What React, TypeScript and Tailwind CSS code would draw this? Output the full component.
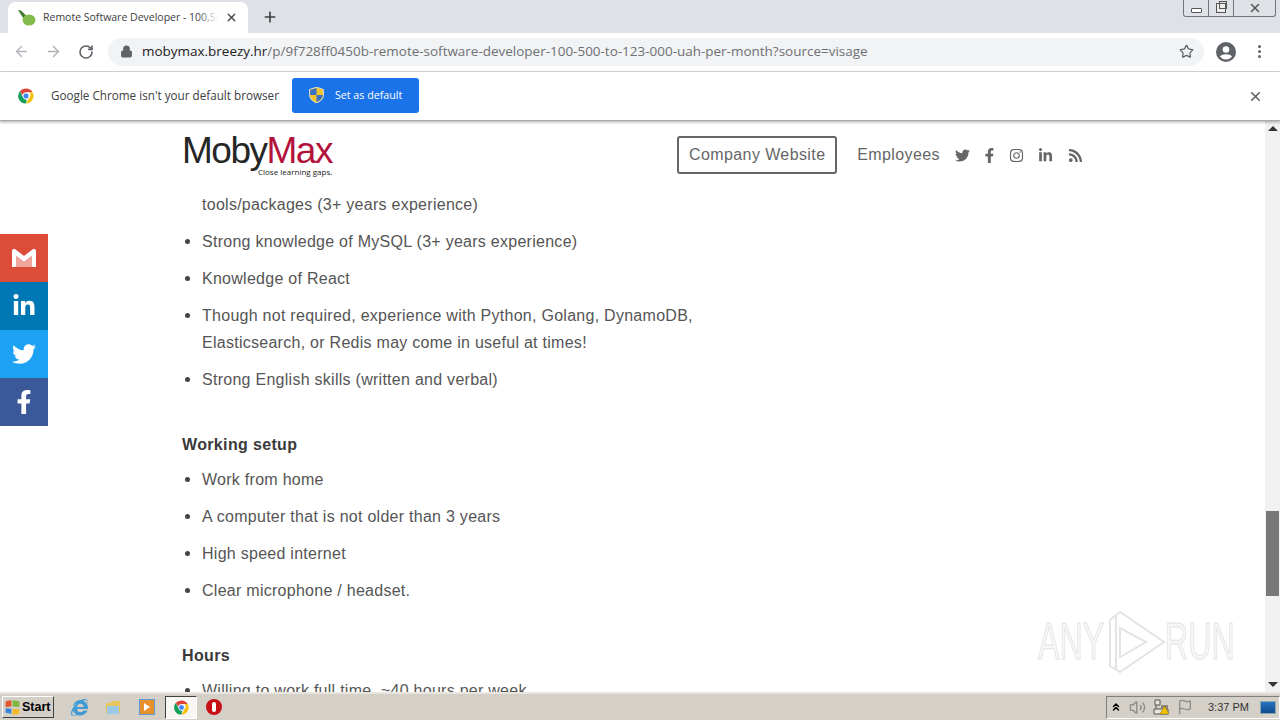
import { ArrowLeft, ArrowRight, RotateCw, Star, X, Plus, Lock, ChevronsUp, Volume2, Flag } from 'lucide-react';
import { FaTwitter, FaFacebookF, FaInstagram, FaLinkedinIn, FaRss, FaInternetExplorer } from 'react-icons/fa';

const setup = ['Work from home', 'A computer that is not older than 3 years', 'High speed internet', 'Clear microphone / headset.'];

function ChromeLogo({ size }: { size: number }) {
  return (
    <svg width={size} height={size} viewBox="0 0 48 48">
      <path d="M24 4a20 20 0 0 1 17.3 10H24a10 10 0 0 0-9.6 7.2L7.6 11.6A20 20 0 0 1 24 4z" fill="#db4437" />
      <path d="M41.3 14A20 20 0 0 1 24 44l8.6-15a10 10 0 0 0 0-15z" fill="#f4c20d" />
      <path d="M24 44A20 20 0 0 1 7.6 11.6L16 27a10 10 0 0 0 10 6.8z" fill="#0f9d58" />
      <circle cx="24" cy="24" r="8" fill="#4285f4" stroke="#fff" strokeWidth="2" />
    </svg>
  );
}

function Bullet({ children }: { children: React.ReactNode }) {
  return (
    <li className="relative pl-5 mb-[10px] leading-[27px]">
      <span className="absolute left-[3px] top-[11px] w-[5px] h-[5px] rounded-full bg-[#444]" />
      {children}
    </li>
  );
}

function TabStrip() {
  return (
    <div className="h-[33px] bg-[#dee1e6] flex items-end relative shrink-0">
      <div className="ml-2 w-[240px] h-[31px] bg-white rounded-t-lg flex items-center pl-[10px] pr-[10px]">
        <svg width="18" height="16" viewBox="0 0 18 16" className="shrink-0">
          <path d="M0 0l3 .5 5 5-2.500 3z" fill="#3f7a30" />
          <ellipse cx="11" cy="10" rx="6.500" ry="5.500" fill="#82bb4c" />
        </svg>
        <div className="relative ml-[7px] w-[175px] overflow-hidden whitespace-nowrap text-[10.5px] text-[#3c4043] font-['Open_Sans',sans-serif]">
          Remote Software Developer - 100,500 to 123,000 UAH
          <div className="absolute right-0 top-0 bottom-0 w-5 bg-gradient-to-r from-transparent to-white" />
        </div>
        <X size={13} strokeWidth={2.5} className="ml-auto text-[#45494d]" />
      </div>
      <Plus size={16} strokeWidth={2.5} className="ml-[14px] mb-2 text-[#3c4043]" />
      <div className="absolute right-1 top-0 w-[93px] h-[17px] flex border border-t-0 border-[#70757c] rounded-b-[3px] text-[#555]">
        <div className="w-[25px] border-r border-[#70757c] flex items-center justify-center">
          <div className="w-[11px] h-[5px] mt-1 border border-[#555] rounded-[1px] bg-white" />
        </div>
        <div className="w-[25px] border-r border-[#70757c] flex items-center justify-center">
          <div className="relative w-[10px] h-[10px] border border-[#555] bg-[#eee]">
            <div className="absolute -top-[3px] left-[2px] w-[8px] h-[8px] border border-[#555]" />
          </div>
        </div>
        <div className="flex-1 flex items-center justify-center">
          <X size={14} strokeWidth={2.5} />
        </div>
      </div>
    </div>
  );
}

function Toolbar() {
  return (
    <div className="h-[39px] bg-white border-b border-[#d9dadc] flex items-center shrink-0 pb-[1px]">
      <ArrowLeft size={17} className="ml-[13px] text-[#b0b4b8]" />
      <ArrowRight size={17} className="ml-[15px] text-[#b0b4b8]" />
      <RotateCw size={16} strokeWidth={2.4} className="ml-[16px] text-[#5f6368]" />
      <div className="ml-[14px] w-[1096px] h-[28px] rounded-full bg-[#f1f3f4] flex items-center pl-[12px] pr-[10px]">
        <Lock size={13} fill="#5f6368" className="text-[#5f6368]" />
        <div className="ml-[9px] text-[13.48px] text-[#202124] whitespace-nowrap font-['Open_Sans',sans-serif]">
          mobymax.breezy.hr<span className="text-[#6e7174]">/p/9f728ff0450b-remote-software-developer-100-500-to-123-000-uah-per-month?source=visage</span>
        </div>
        <Star size={15} strokeWidth={2} className="ml-auto text-[#5f6368]" />
      </div>
      <svg width="20" height="20" viewBox="0 0 20 20" className="ml-3">
        <circle cx="10" cy="10" r="10" fill="#5f6368" />
        <circle cx="10" cy="7.5" r="3.3" fill="#fff" />
        <path d="M3.8 14.6c2.500-3.200 9.900-3.200 12.400 0A8 8 0 0 1 3.800 14.600z" fill="#fff" />
      </svg>
      <div className="ml-[22px] flex flex-col gap-[2px]">
        <span className="w-[3px] h-[3px] rounded-full bg-[#5f6368]" />
        <span className="w-[3px] h-[3px] rounded-full bg-[#5f6368]" />
        <span className="w-[3px] h-[3px] rounded-full bg-[#5f6368]" />
      </div>
    </div>
  );
}

function InfoBar() {
  return (
    <div className="h-[49px] bg-white border-b border-[#a9a9a9] shadow-[0_1px_3px_rgba(0,0,0,0.35)] flex items-center pl-[17px] shrink-0 relative z-10 font-['Open_Sans',sans-serif]">
      <ChromeLogo size={18} />
      <span className="ml-[16px] text-[11.7px] text-[#3c4043]">Google Chrome isn't your default browser</span>
      <div className="ml-[13px] mb-[2px] w-[127px] h-[35px] rounded-[3px] bg-[#1a73e8] flex items-center pl-[17px] text-white text-[10.7px]">
        <svg width="15" height="16" viewBox="0 0 15 16">
          <path d="M7.5 0L14.5 2.500V8c0 4-3.500 6.500-7 8-3.500-1.500-7-4-7-8V2.500z" fill="#f4c430" stroke="#fff" strokeWidth="0.6" />
          <path d="M7.500 1v7H1.200V3zM7.500 8h6.300c-.2 3.500-3.300 5.800-6.300 7z" fill="#3b6fc4" />
        </svg>
        <span className="ml-[11px]">Set as default</span>
      </div>
      <X size={15} strokeWidth={2.5} className="ml-auto mr-[17px] text-[#5f6368]" />
    </div>
  );
}

function PageHeader() {
  return (
    <div className="h-[66px] pl-[182px] pr-[182px] pt-[2px] flex items-center bg-white tracking-[0.4px]">
      <div className="relative w-[152px] h-[48px] pt-[4px] font-['Open_Sans',sans-serif]">
        <div className="text-[37px] leading-[32px] tracking-[-1.5px] whitespace-nowrap font-['Liberation_Sans',sans-serif]">
          <span className="text-[#262626]">Moby</span>
          <span className="text-[#b3123b]">Max</span>
        </div>
        <div className="absolute left-[76px] top-[36px] text-[8px] leading-[10px] tracking-normal whitespace-nowrap text-[#222]">Close learning gaps.</div>
      </div>
      <div className="ml-auto w-[160px] h-[38px] border-2 border-[#666] rounded-[3px] flex items-center justify-center text-[#666]">Company Website</div>
      <span className="ml-[20px] text-[#666]">Employees</span>
      <div className="flex items-center ml-[15px] text-[#666] text-[15px]">
        <FaTwitter />
        <FaFacebookF className="ml-[12px]" />
        <FaInstagram className="ml-[12px]" />
        <FaLinkedinIn className="ml-[14px]" />
        <FaRss className="ml-[15px]" />
      </div>
    </div>
  );
}

function Watermark() {
  return (
    <div className="absolute left-[1038px] top-[489px] w-[194px] h-[62px] pointer-events-none blur-[0.4px]">
      <span className="absolute left-0 top-[5px] origin-left scale-x-[0.62] text-[52px] leading-[52px] text-[#f6f6f6] [-webkit-text-stroke:1px_#e2e2e2]">ANY</span>
      <svg width="58" height="64" viewBox="0 0 58 64" className="absolute left-[70px] top-0" fill="none" stroke="#e4e4e4" strokeWidth="2">
        <path d="M2 10L12 2l44 30-44 30-10-6z" />
        <path d="M12 18l26 14-26 15z" />
        <path d="M2 10v46M8 6v54" />
      </svg>
      <span className="absolute left-[127px] top-[5px] origin-left scale-x-[0.62] text-[52px] leading-[52px] text-[#f6f6f6] [-webkit-text-stroke:1px_#e2e2e2]">RUN</span>
    </div>
  );
}

function SocialBar() {
  return (
    <div className="absolute left-0 top-[113px] w-12 flex flex-col text-white">
      <div className="h-12 bg-[#dd4b39] flex items-center justify-center">
        <svg width="24" height="18" viewBox="0 0 24 18">
          <path d="M0 1.500C0 .5 1 0 2 0h1l9 7 9-7h1c1 0 2 .5 2 1.500V18h-4V7l-8 6-8-6v11H0z" fill="#fff" />
          <path d="M4 7l8 6 8-6v11H4z" fill="#f1a69c" />
        </svg>
      </div>
      <div className="h-12 bg-[#0077b5] flex items-center justify-center text-[24px]"><FaLinkedinIn /></div>
      <div className="h-12 bg-[#1da1f2] flex items-center justify-center text-[24px]"><FaTwitter /></div>
      <div className="h-12 bg-[#3b5998] flex items-center justify-center text-[24px]"><FaFacebookF /></div>
    </div>
  );
}

function Taskbar() {
  return (
    <div className="h-[28px] bg-[#d4d0c8] border-t-2 border-[#e9e6df] flex items-center shrink-0 font-['Liberation_Sans',sans-serif]">
      <div className="ml-[2px] w-[52px] h-[22px] border border-t-white border-l-white border-r-[#404040] border-b-[#404040] flex items-center pl-[1px] gap-[1px] text-[12.5px] font-bold text-black">
        <svg width="17" height="16" viewBox="0 0 14 14">
          <path d="M1 2l5-1v5.500L1 7z" fill="#e2562c" />
          <path d="M7 1l6 1v5l-6-.5z" fill="#7fb83c" />
          <path d="M1 8l5 .5V13l-5-1z" fill="#3b82d8" />
          <path d="M7 8.500l6 .5v4l-6 1z" fill="#f3bb2d" />
        </svg>
        Start
      </div>
      <FaInternetExplorer className="ml-[17px] text-[#3f9ad6] text-[17px]" />
      <svg width="16" height="16" viewBox="0 0 16 16" className="ml-[17px]">
        <path d="M1 4h5l1-2h8v12H1z" fill="#e9c75e" />
        <path d="M2 7h12v8H2z" fill="#9cc9e8" />
      </svg>
      <div className="ml-[18px] w-[16px] h-[16px] bg-[#e8902e] border border-[#5a9bd5] flex items-center justify-center">
        <div className="w-0 h-0 border-y-[4px] border-y-transparent border-l-[6px] border-l-white" />
      </div>
      <div className="ml-[10px] w-[32px] h-[23px] bg-[#f7f6f3] border border-t-[#404040] border-l-[#404040] border-r-white border-b-white flex items-center justify-center">
        <ChromeLogo size={17} />
      </div>
      <div className="ml-[9px] w-[16px] h-[16px] rounded-full bg-[#c70f16] flex items-center justify-center">
        <div className="w-[4px] h-[10px] rounded-full bg-white" />
      </div>
      <div className="ml-auto w-[174px] h-[23px] border border-[#808080] border-r-white border-b-white flex items-center pl-[3px] text-[#333]">
        <ChevronsUp size={12} strokeWidth={3} className="text-black" />
        <Volume2 size={17} className="ml-[7px] text-[#8c8c8c]" />
        <svg width="17" height="16" viewBox="0 0 17 16" className="ml-[7px]">
          <path d="M2 1h5v5H2zM3 6v4M1 10h14v5H1z" fill="#e8e5dc" stroke="#555" />
          <path d="M8 6h7v4H8z" fill="#8b8678" />
          <path d="M11.500 7l4.500 8H7z" fill="#f2c200" stroke="#8a6d00" strokeWidth="0.5" />
        </svg>
        <Flag size={16} className="ml-[7px] text-[#8c8c8c]" />
        <span className="ml-[15px] mt-[1px] text-[11px] whitespace-nowrap">3:37 PM</span>
        <div className="ml-auto mr-[3px] w-[16px] h-[13px] bg-gradient-to-b from-[#2a73c0] to-[#0f4a90] border border-[#8aa]" />
      </div>
    </div>
  );
}

export default function App() {
  return (
    <div className="w-[1280px] h-[720px] overflow-hidden flex flex-col bg-white font-['Liberation_Sans',sans-serif]">
      <TabStrip />
      <Toolbar />
      <InfoBar />
      <div className="flex-1 min-h-0 flex relative">
        <div className="flex-1 overflow-hidden text-[16px] text-[#555]">
          <PageHeader />
          <div className="pl-[182px] w-[720px] pt-[4px] tracking-[0.27px]">
            <div className="pl-5 leading-[27px] mb-[10px]">tools/packages (3+ years experience)</div>
            <ul>
              <Bullet>Strong knowledge of MySQL (3+ years experience)</Bullet>
              <Bullet>Knowledge of React</Bullet>
              <Bullet>Though not required, experience with Python, Golang, DynamoDB, Elasticsearch, or Redis may come in useful at times!</Bullet>
              <Bullet>Strong English skills (written and verbal)</Bullet>
            </ul>
            <h3 className="mt-[38px] mb-[8px] leading-[27px] font-bold tracking-[0.35px] text-[#3a3a3a]">Working setup</h3>
            <ul>
              {setup.map((s) => (
                <Bullet key={s}>{s}</Bullet>
              ))}
            </ul>
            <h3 className="mt-[38px] mb-[8px] leading-[27px] font-bold tracking-[0.35px] text-[#3a3a3a]">Hours</h3>
            <ul>
              <Bullet>Willing to work full time, ~40 hours per week</Bullet>
            </ul>
          </div>
        </div>
        <div className="w-[15px] bg-[#f1f1f1] flex flex-col items-center relative">
          <div className="mt-[5px] w-0 h-0 border-x-[5px] border-x-transparent border-b-[5px] border-b-[#333]" />
          <div className="mt-[380px] w-[13px] h-[85px] bg-[#787878]" />
          <div className="mt-auto mb-[5px] w-0 h-0 border-x-[5px] border-x-transparent border-t-[5px] border-t-[#333]" />
        </div>
        <SocialBar />
        <Watermark />
      </div>
      <Taskbar />
    </div>
  );
}
